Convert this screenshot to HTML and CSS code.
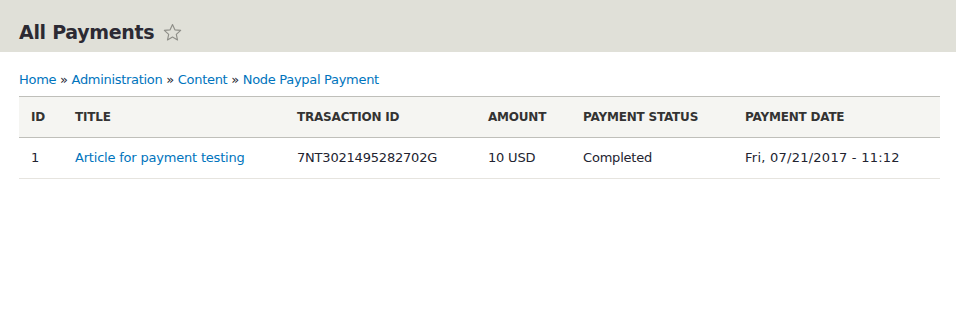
FILE: index.html
```html
<!DOCTYPE html>
<html>
<head>
<meta charset="utf-8">
<link rel="stylesheet" href="styles.css">
</head>
<body>
<header class="page-header">
  <h1 class="page-title">All Payments <span class="shortcut"><svg width="19" height="19" viewBox="0 0 20 20"><path d="M10 1.6l2.5 5.6 6.1.6-4.6 4.1 1.3 6-5.3-3.1-5.3 3.1 1.3-6L1.4 7.8l6.1-.6z" fill="none" stroke="#8e8e88" stroke-width="1.2" stroke-linejoin="round"/></svg></span></h1>
</header>
<main class="content">
  <nav class="breadcrumb"><a href="#">Home</a> » <a href="#">Administration</a> » <a href="#">Content</a> » <a href="#">Node Paypal Payment</a></nav>
  <table class="payments">
    <thead>
      <tr>
        <th class="c-id">ID</th>
        <th class="c-title">Title</th>
        <th class="c-txn">Trasaction ID</th>
        <th class="c-amt">Amount</th>
        <th class="c-status">Payment Status</th>
        <th class="c-date">Payment Date</th>
      </tr>
    </thead>
    <tbody>
      <tr>
        <td>1</td>
        <td><a href="#">Article for payment testing</a></td>
        <td>7NT3021495282702G</td>
        <td>10 USD</td>
        <td>Completed</td>
        <td class="date">Fri, 07/21/2017 - 11:12</td>
      </tr>
    </tbody>
  </table>
</main>
</body>
</html>
```
FILE: styles.css
```css
html, body {
  margin: 0;
  padding: 0;
  background: #fff;
  font-family: "DejaVu Sans", Verdana, sans-serif;
  color: #222330;
}
.page-header {
  background: #e0e0d8;
  height: 52px;
  box-sizing: border-box;
  padding: 12px 19px 0;
  display: flex;
  align-items: center;
}
.page-title {
  margin: 0;
  font-size: 19px;
  font-weight: bold;
  color: #2c2a33;
  display: flex;
  align-items: center;
  gap: 9px;
  letter-spacing: -0.3px;
}
.shortcut {
  display: flex;
  margin-top: 1px;
}
.content {
  padding: 19px 16px 0 19px;
}
.breadcrumb {
  font-size: 13px;
  line-height: 18px;
  color: #222330;
  margin-bottom: 7px;
  letter-spacing: -0.3px;
}
.breadcrumb a, .payments a {
  color: #0074bd;
  text-decoration: none;
}
.payments {
  width: 100%;
  border-collapse: collapse;
  font-size: 13px;
  letter-spacing: -0.2px;
}
.payments thead tr {
  background: #f5f5f2;
  border-top: 1px solid #bfbfba;
  border-bottom: 1px solid #bfbfba;
}
.payments th {
  text-align: left;
  text-transform: uppercase;
  font-size: 12px;
  font-weight: bold;
  color: #333;
  height: 41px;
  padding: 0 12px;
  box-sizing: border-box;
}
.payments td {
  height: 41px;
  padding: 0 12px 2px;
  box-sizing: border-box;
  color: #222330;
}
.payments td.date {
  letter-spacing: 0.25px;
}
.payments tbody tr {
  border-bottom: 1px solid #e6e4df;
}
.c-id { width: 44px; }
.c-title { width: 222px; }
.c-txn { width: 191px; }
.c-amt { width: 95px; }
.c-status { width: 162px; }
```
